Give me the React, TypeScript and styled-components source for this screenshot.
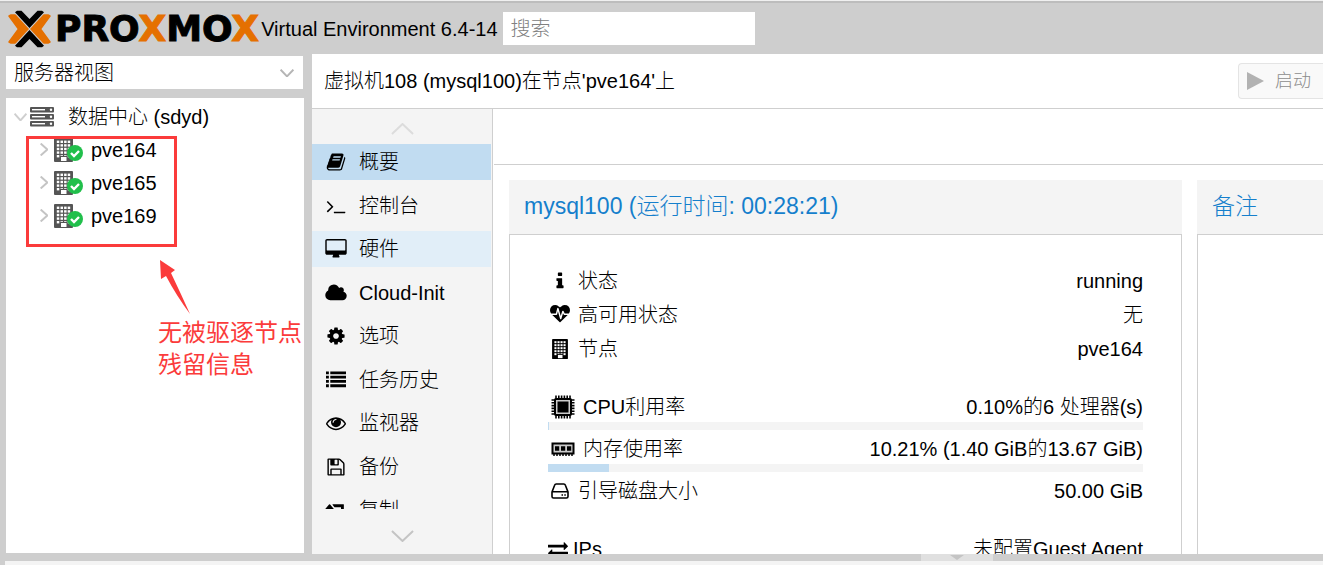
import React from "react";
import styled, { createGlobalStyle, css } from "styled-components";

const GlobalStyle = createGlobalStyle`
  *, *::before, *::after { box-sizing: border-box; }
  html, body, #root { height: 100%; }
  body {
    margin: 0;
    overflow: hidden;
    background: #cecece;
    color: #000;
    font-family: "Liberation Sans", "Noto Sans CJK SC", sans-serif;
    font-size: 20px;
    font-weight: 300;
    line-height: 24px;
  }
  input, select, button { font: inherit; color: inherit; }
`;

/* ---------- icons ---------- */

const PATHS = {
  book: "M1703 478q40 57 18 129l-275 906q-19 64-76.5 107.5t-122.5 43.5h-923q-77 0-148.5-53.5t-99.5-131.5q-24-67-2-127 0-4 3-27t4-37q1-8-3-21.5t-3-19.5q2-11 8-21t16.5-23.5 16.5-23.5q23-38 45-91.5t30-91.5q3-10 .5-30t-.5-28q3-11 17-28t17-23q21-36 42-92t25-90q1-9-2.5-32t.5-28q4-13 22-30.5t22-22.5q19-26 42.5-84.5t27.5-96.5q1-8-3-25.5t-2-26.5q2-8 9-18t18-23 17-21q8-12 16.5-30.5t15-35 16-36 19.5-32 26.5-23.5 36-11.5 47.5 5.5l-1 3q38-9 51-9h761q74 0 114 56t18 130l-274 906q-36 119-71.5 153.5t-128.5 34.5h-869q-27 0-38 15-11 16-1 43 24 70 144 70h923q29 0 56-15.5t35-41.5l300-987q7-22 5-57 38 15 59 43zm-1064 2q-4 13 2 22.5t20 9.5h608q13 0 25.5-9.5t16.5-22.5l21-64q4-13-2-22.5t-20-9.5h-608q-13 0-25.5 9.5t-16.5 22.5zm-83 256q-4 13 2 22.5t20 9.5h608q13 0 25.5-9.5t16.5-22.5l21-64q4-13-2-22.5t-20-9.5h-608q-13 0-25.5 9.5t-16.5 22.5z",
  terminal: "M649 983l-466 466q-10 10-23 10t-23-10l-50-50q-10-10-10-23t10-23l393-393-393-393q-10-10-10-23t10-23l50-50q10-10 23-10t23 10l466 466q10 10 10 23t-10 23zm1079 457v64q0 14-9 23t-23 9h-960q-14 0-23-9t-9-23v-64q0-14 9-23t23-9h960q14 0 23 9t9 23z",
  desktop: "M1728 992v-832q0-13-9.5-22.5t-22.5-9.5h-1600q-13 0-22.5 9.5t-9.5 22.5v832q0 13 9.5 22.5t22.5 9.5h1600q13 0 22.5-9.5t9.5-22.5zm128-832v1088q0 66-47 113t-113 47h-544q0 37 16 77.5t32 71 16 43.5q0 26-19 45t-45 19h-512q-26 0-45-19t-19-45q0-14 16-44t32-70 16-78h-544q-66 0-113-47t-47-113v-1088q0-66 47-113t113-47h1600q66 0 113 47t47 113z",
  cloud: "M1856 1152q0 159-112.5 271.5t-271.5 112.5h-1088q-185 0-316.5-131.5t-131.5-316.5q0-132 71-241.5t187-163.5q-2-28-2-43 0-212 150-362t362-150q158 0 286.5 88t187.5 230q70-62 166-62 106 0 181 75t75 181q0 75-41 138 129 30 213 134.5t84 239.5z",
  cog: "M1152 896q0-106-75-181t-181-75-181 75-75 181 75 181 181 75 181-75 75-181zm512-109v222q0 12-8 23t-20 13l-185 28q-19 54-39 91 35 50 107 138 10 12 10 25t-9 23q-27 37-99 108t-94 71q-12 0-26-9l-138-108q-44 23-91 38-16 136-29 186-7 28-36 28h-222q-14 0-24.5-8.5t-11.5-21.5l-28-184q-49-16-90-37l-141 107q-10 9-25 9-14 0-25-11-126-114-165-168-7-10-7-23 0-12 8-23 15-21 51-66.5t54-70.5q-27-50-41-99l-183-27q-13-2-21-12.5t-8-23.5v-222q0-12 8-23t19-13l186-28q14-46 39-92-40-57-107-138-10-12-10-24 0-10 9-23 26-36 98.5-107.5t94.5-71.5q13 0 26 10l138 107q44-23 91-38 16-136 29-186 7-28 36-28h222q14 0 24.5 8.5t11.5 21.5l28 184q49 16 90 37l142-107q9-9 24-9 13 0 25 10 129 119 165 170 7 8 7 22 0 12-8 23-15 21-51 66.5t-54 70.5q26 50 41 98l183 28q13 2 21 12.5t8 23.5z",
  list: "M0 1280h256v256H0zM0 896h256v256H0zM0 512h256v256H0zM0 128h256v256H0zM384 1280h1408v256H384zM384 896h1408v256H384zM384 512h1408v256H384zM384 128h1408v256H384z",
  eye: "M1664 960q-152-236-381-353 61 104 61 225 0 185-131.5 316.5t-316.5 131.5-316.5-131.5-131.5-316.5q0-121 61-225-229 117-381 353 133 205 333.5 326.5t434.5 121.5 434.5-121.5 333.5-326.5zm-720-384q0-20-14-34t-34-14q-125 0-214.5 89.5t-89.5 214.5q0 20 14 34t34 14 34-14 14-34q0-86 61-147t147-61q20 0 34-14t14-34zm848 384q0 34-20 69-140 230-376.5 368.5t-499.5 138.5-499.5-139-376.5-368q-20-35-20-69t20-69q140-229 376.5-368t499.5-139 499.5 139 376.5 368q20 35 20 69z",
  floppy: "M512 1536h768v-384h-768v384zm896 0h128v-896q0-14-10-38.5t-20-34.5l-281-281q-10-10-34-20t-39-10v416q0 40-28 68t-68 28h-576q-40 0-68-28t-28-68v-416h-128v1280h128v-416q0-40 28-68t68-28h832q40 0 68 28t28 68v416zm-384-928v-320q0-13-9.5-22.5t-22.5-9.5h-192q-13 0-22.5 9.5t-9.5 22.5v320q0 13 9.5 22.5t22.5 9.5h192q13 0 22.5-9.5t9.5-22.5zm640 32v928q0 40-28 68t-68 28h-1344q-40 0-68-28t-28-68v-1344q0-40 28-68t68-28h928q40 0 88 20t76 48l280 280q28 28 48 76t20 88z",
  retweet: "M1280 1504q0 13-9.5 22.5t-22.5 9.5h-960q-8 0-13.5-2t-9-7-5.5-8-3-11.5-1-11.5v-600h-192q-26 0-45-19t-19-45q0-24 15-41l320-384q19-22 49-22t49 22l320 384q15 17 15 41 0 26-19 45t-45 19h-192v384h576q16 0 25 11l160 192q7 10 7 21zm640-416q0 24-15 41l-320 384q-20 23-49 23t-49-23l-320-384q-15-17-15-41 0-26 19-45t45-19h192v-384h-576q-16 0-25-12l-160-192q-7-9-7-20 0-13 9.5-22.5t22.5-9.5h960q8 0 13.5 2t9 7 5.5 8 3 11.5 1 11.5v600h192q26 0 45 19t19 45z",
  info: "M1216 1344v128q0 26-19 45t-45 19h-512q-26 0-45-19t-19-45v-128q0-26 19-45t45-19h64v-384h-64q-26 0-45-19t-19-45v-128q0-26 19-45t45-19h384q26 0 45 19t19 45v576h64q26 0 45 19t19 45zm-128-1152v192q0 26-19 45t-45 19h-256q-26 0-45-19t-19-45v-192q0-26 19-45t45-19h256q26 0 45 19t19 45z",
  heartbeat: "M1280 896h305q-5 6-10 10.5t-9 7.5l-3 4-623 600q-18 18-44 18t-44-18l-624-602q-5-2-21-20h369q22 0 39.5-13.5t22.5-34.5l70-281 190 667q6 20 23 33t39 13q21 0 38-13t23-33l146-485 56 112q18 35 57 35zm512-428q0 145-103 300h-369l-111-221q-8-17-25.5-27t-36.5-8q-45 5-56 46l-129 430-196-686q-6-20-23.5-33t-39.5-13-39 13.5-22 34.5l-116 464h-423q-103-155-103-300 0-220 127-344t351-124q62 0 126.5 21.5t120 58 95.5 68.5 76 68q36-36 76-68t95.5-68.5 120-58 126.5-21.5q224 0 351 124t127 344z",
  exchange: "M1792 1184v192q0 13-9.5 22.5t-22.5 9.5h-1376v192q0 13-9.5 22.5t-22.5 9.5q-12 0-24-10l-319-320q-9-9-9-22 0-14 9-23l320-320q9-9 23-9 13 0 22.5 9.5t9.5 22.5v192h1376q13 0 22.5 9.5t9.5 22.5zm0-544q0 14-9 23l-320 320q-9 9-23 9-13 0-22.5-9.5t-9.5-22.5v-192h-1376q-13 0-22.5-9.5t-9.5-22.5v-192q0-13 9.5-22.5t22.5-9.5h1376v-192q0-14 9-23t23-9q12 0 24 10l319 319q9 9 9 23z",
};

type GlyphName = keyof typeof PATHS;

const WIDE: GlyphName[] = ["desktop", "cloud"];

const Svg = styled.svg`
  display: block;
  flex: none;
`;

function Glyph({ name, size }: { name: GlyphName; size: number }) {
  const wide = WIDE.includes(name) || name === "retweet";
  const left = WIDE.includes(name) ? -64 : 0;
  return (
    <Svg
      width={wide ? size + 2 : size}
      height={size}
      viewBox={`${left} 0 ${wide ? 1920 : 1792} 1792`}
      fill="currentColor"
      aria-hidden="true"
    >
      <path d={PATHS[name]} />
    </Svg>
  );
}

function Building({ width, height }: { width: number; height: number }) {
  const columns = [2.8, 6.5, 10.1, 13.7];
  const rows = [2.6, 6.2, 9.8, 13.4, 17];
  return (
    <Svg width={width} height={height} viewBox="0 0 19 24" aria-hidden="true">
      <rect width="19" height="24" rx="1" fill="currentColor" />
      {rows.map((y) =>
        columns.map((x) => <rect key={`${x}-${y}`} x={x} y={y} width="2.5" height="2.4" fill="#fff" />)
      )}
      <path d="M6 17.800h7v5H6z" fill="currentColor" />
      <path d="M7 19h5.500v4H7z" fill="#fff" />
    </Svg>
  );
}

function Servers() {
  return (
    <Svg width="24" height="20" viewBox="0 0 24 20" aria-hidden="true">
      {[0, 7, 14].map((y) => (
        <g key={y}>
          <rect y={y} width="24" height="5.500" rx="1" fill="#555" />
          <rect x="2" y={y + 2} width="13" height="1.400" fill="#fff" />
          <circle cx="21" cy={y + 2.7} r="1.2" fill="#fff" />
        </g>
      ))}
    </Svg>
  );
}

function Cpu() {
  const pins = [5, 7.8, 10.6, 13.4, 16.2, 19];
  return (
    <Svg width="24" height="24" viewBox="0 0 24 24" aria-hidden="true">
      {pins.map((p) => (
        <path key={p} d={`M${p} .5v23M.5 ${p}h23`} stroke="#000" strokeWidth="1.6" />
      ))}
      <rect x="4" y="4" width="16" height="16" rx="1" fill="#ccc" stroke="#000" strokeWidth="2" />
      <rect x="6.500" y="6.500" width="11" height="11" fill="#000" />
    </Svg>
  );
}

function Memory() {
  return (
    <Svg width="24" height="24" viewBox="0 0 24 24" aria-hidden="true">
      <rect x="1.500" y="6.500" width="21" height="10" fill="#ccc" stroke="#000" strokeWidth="2" />
      <path d="M4 9.200h4.200v4.500H4zM10 9.200h4.200v4.500H10zM16 9.200h4.200v4.500H16z" fill="#000" />
      <path d="M3 17v2M6 17v2M9 17v2M12 17v2M15 17v2M18 17v2M21 17v2" stroke="#000" strokeWidth="1.5" />
    </Svg>
  );
}

function Drive() {
  return (
    <Svg width="18" height="16" viewBox="0 0 18 16" fill="none" stroke="#000" strokeWidth="1.6" aria-hidden="true">
      <path d="M1 9L3.6 2.2Q4 1 5.200 1h7.600Q14 1 14.400 2.200L17 9v4.500Q17 15 15.500 15h-13Q1 15 1 13.500zM1.500 8.800h15" />
      <path d="M10.500 12h1.500M13.300 12h1.500" />
    </Svg>
  );
}

function Chevron({ direction, color, width, height }: { direction: "up" | "down" | "right"; color: string; width: number; height: number }) {
  const d = { up: "M1 11L12 1L23 11", down: "M1 1L12 11L23 1", right: "M1 1L11 12L1 23" }[direction];
  return (
    <Svg
      width={width}
      height={height}
      viewBox={direction === "right" ? "0 0 12 24" : "0 0 24 12"}
      preserveAspectRatio="none"
      fill="none"
      stroke={color}
      strokeWidth="2"
      aria-hidden="true"
    >
      <path d={d} vectorEffect="non-scaling-stroke" />
    </Svg>
  );
}

/* ---------- header ---------- */

const Page = styled.div`
  display: flex;
  flex-direction: column;
  height: 100vh;
  border-top: 1px solid #f0f0f0;
  overflow: hidden;
`;

const Header = styled.header`
  display: flex;
  align-items: center;
  flex: none;
  height: 53px;
  padding: 0 8px;
  border-top: 2px solid #bdbdbd;
`;

const Wordmark = styled.span`
  margin-left: 3px;
  font: bold 36px/40px "DejaVu Sans", sans-serif;
  -webkit-text-stroke: 1px currentColor;
`;

const Accent = styled.span`
  color: #e57000;
`;

const Version = styled.span`
  margin-left: 2px;
  white-space: nowrap;
`;

const Search = styled.input`
  width: 252px;
  height: 33px;
  margin-left: 5px;
  padding: 2px 8px 0;
  border: 0;
  background: #fff;
  &::placeholder { color: #808080; opacity: 1; }
`;

function Logo() {
  return (
    <Svg width="44" height="38" viewBox="0 0 44 38" strokeLinejoin="round" aria-hidden="true">
      <path
        d="M1 6L3 5H8L11 7L20.500 19L11 31L8 33H3L1 32L10.500 19ZM42 6L40 5H35L32 7L22.500 19L32 31L35 33H40L42 32L32.500 19Z"
        fill="#e57000"
        stroke="#e57000"
        strokeWidth="1.500"
      />
      <path
        d="M7 2.200L9 .8H13.500L21.500 9L29.500 .8H34L36 2.200L21.500 18ZM7 35.800L9 37.200H13.500L21.500 29L29.500 37.200H34L36 35.800L21.500 20Z"
        fill="#000"
        stroke="#cecece"
        strokeWidth="2"
        paintOrder="stroke"
      />
    </Svg>
  );
}

/* ---------- body layout ---------- */

const Body = styled.div`
  display: flex;
  flex: 1;
  gap: 8px;
  min-height: 0;
  padding-left: 6px;
`;

const Sidebar = styled.aside`
  display: flex;
  flex-direction: column;
  flex: none;
  gap: 9px;
  width: 298px;
  padding: 2px 0 1px;
`;

const ViewPicker = styled.div`
  position: relative;
  flex: none;
`;

const ViewSelect = styled.select`
  display: block;
  width: 297px;
  height: 33px;
  padding: 0 8px;
  border: 0;
  border-radius: 0;
  background: #fff;
  appearance: none;
`;

const PickerArrow = styled.span`
  position: absolute;
  top: 13px;
  right: 10px;
  pointer-events: none;
`;

const Tree = styled.nav`
  position: relative;
  flex: 1;
  padding: 2px 0 0 8px;
  background: #fff;
`;

const TreeList = styled.ul`
  margin: 0;
  padding: 0;
  list-style: none;
`;

const TreeRow = styled.li<{ $child?: boolean }>`
  display: flex;
  align-items: center;
  height: 33px;
  padding-left: ${(p) => (p.$child ? 26 : 0)}px;
`;

const NodeIcon = styled.span<{ $child?: boolean }>`
  position: relative;
  width: ${(p) => (p.$child ? 29 : 24)}px;
  margin: 0 ${(p) => (p.$child ? 8 : 14)}px 0 ${(p) => (p.$child ? 6 : 3)}px;
  color: #555;
`;

const StatusBadge = styled.svg`
  position: absolute;
  right: 0;
  bottom: 1px;
`;

const Highlight = styled.div`
  position: absolute;
  top: 38px;
  left: 20px;
  width: 151px;
  height: 111px;
  border: 3px solid #fb3b3b;
`;

const Note = styled.figure`
  position: absolute;
  top: 161px;
  left: 152px;
  margin: 0;
  color: #fb3b3b;
  font-size: 24px;
  font-weight: 400;
  line-height: 32px;
  white-space: nowrap;
`;

const Main = styled.main`
  display: flex;
  flex-direction: column;
  flex: 1;
  min-width: 0;
  background: #fff;
`;

const TitleBar = styled.div`
  display: flex;
  align-items: center;
  justify-content: space-between;
  flex: none;
  height: 55px;
  padding-left: 12px;
  border-bottom: 1px solid #cfcfcf;
  overflow: hidden;
`;

const StartButton = styled.button`
  display: flex;
  align-items: center;
  gap: 11px;
  height: 36px;
  padding: 0 12px 0 8px;
  border: 1px solid #e4e4e4;
  border-right: 0;
  border-radius: 4px 0 0 4px;
  background: #f9f9f9;
  color: #8c8c8c;
  font-size: 18px;
`;

const Workspace = styled.div`
  display: flex;
  flex: 1;
  min-height: 0;
`;

const Menu = styled.nav`
  display: flex;
  flex-direction: column;
  flex: none;
  width: 181px;
  border-right: 1px solid #cfcfcf;
  background: #f4f4f4;
`;

const Scroller = styled.button`
  display: flex;
  align-items: center;
  justify-content: center;
  flex: none;
  height: 35px;
  padding: 4px 0 0;
  border: 0;
  background: none;
`;

const ScrollerEnd = styled(Scroller)`
  height: 45px;
  padding-top: 8px;
`;

const MenuList = styled.ul`
  flex: 1;
  min-height: 0;
  margin: 0;
  padding: 0;
  overflow: hidden;
  list-style: none;
`;

const MenuItem = styled.li`
  margin-bottom: 8px;
  &:nth-child(even) { margin-bottom: 7px; }
`;

const MenuLink = styled.a<{ $state?: "selected" | "hover" }>`
  display: flex;
  align-items: center;
  height: 36px;
  margin-right: 1px;
  padding-left: 12px;
  color: inherit;
  text-decoration: none;
  ${(p) => p.$state === "selected" && css`background: #c1dcf1;`}
  ${(p) => p.$state === "hover" && css`background: #e1eef8;`}
`;

const MenuIcon = styled.span`
  display: flex;
  justify-content: center;
  width: 24px;
  margin-right: 11px;
`;

const Content = styled.section`
  display: flex;
  flex-direction: column;
  flex: 1;
  min-width: 0;
`;

const Toolbar = styled.div`
  flex: none;
  height: 56px;
  margin-left: 1px;
  border-bottom: 1px solid #cfcfcf;
`;

const Cards = styled.div`
  display: grid;
  grid-template-columns: 673px 1fr;
  flex: 1;
  gap: 15px;
  min-height: 0;
  padding: 15px 0 0 16px;
`;

const Card = styled.article`
  display: flex;
  flex-direction: column;
  min-height: 0;
  overflow: hidden;
`;

const CardTitle = styled.h2`
  flex: none;
  height: 54px;
  margin: 0;
  padding: 0 15px;
  background: #f4f4f4;
  color: #157fcc;
  font-size: 23px;
  font-weight: 300;
  line-height: 52px;
`;

const CardBody = styled.div<{ $clipped?: boolean }>`
  flex: 1;
  min-height: 0;
  padding: 29px 38px 0;
  border: 1px solid #cfcfcf;
  border-width: 1px ${(p) => (p.$clipped ? 0 : 1)}px 0 1px;
  overflow: hidden;
`;

const Facts = styled.dl`
  margin: 0 0 26px;
`;

const Fact = styled.div<{ $tall?: boolean }>`
  display: flex;
  align-items: center;
  height: ${(p) => (p.$tall ? 34 : 30)}px;
`;

const ICON_BOX = {
  narrow: css`width: 20px; margin-right: 5px;`,
  normal: css`width: 24px; margin-right: 6px;`,
  wide: css`width: 30px; margin-right: 5px;`,
};

const FactIcon = styled.span<{ $box?: keyof typeof ICON_BOX }>`
  display: flex;
  justify-content: center;
  ${(p) => ICON_BOX[p.$box ?? "normal"]}
`;

const Term = styled.dt`
  flex: 1;
`;

const Value = styled.dd`
  margin: 0;
`;

const Bar = styled.div`
  height: 8px;
  margin-bottom: 4px;
  background: #f4f4f4;
`;

const BarFill = styled.div`
  min-width: 1px;
  height: 8px;
  background: #c1dcf1;
`;

const Footer = styled.footer`
  position: relative;
  display: flex;
  flex: none;
  flex-direction: column;
  height: 11px;
  padding: 7px 0 0 5px;
`;

const LogPanel = styled.div`
  flex: 1;
  background: #f4f4f4;
`;

const CollapseHandle = styled.button`
  position: absolute;
  top: 0;
  left: calc(70% - 5px);
  display: flex;
  align-items: center;
  justify-content: center;
  width: 72px;
  height: 7px;
  padding: 0;
  border: 0;
  background: #e0e0e0;
`;

/* ---------- page ---------- */

const nodes = ["pve164", "pve165", "pve169"];

const menu: { icon: GlyphName; label: string; state?: "selected" | "hover" }[] = [
  { icon: "book", label: "概要", state: "selected" },
  { icon: "terminal", label: "控制台" },
  { icon: "desktop", label: "硬件", state: "hover" },
  { icon: "cloud", label: "Cloud-Init" },
  { icon: "cog", label: "选项" },
  { icon: "list", label: "任务历史" },
  { icon: "eye", label: "监视器" },
  { icon: "floppy", label: "备份" },
  { icon: "retweet", label: "复制" },
];

function UsageBar({ percent }: { percent: number }) {
  return (
    <Bar>
      <BarFill style={{ width: `${percent}%` }} />
    </Bar>
  );
}

export default function App() {
  return (
    <Page>
      <GlobalStyle />
      <Header>
        <Logo />
        <Wordmark>
          PRO<Accent>X</Accent>MO<Accent>X</Accent>
        </Wordmark>
        <Version>Virtual Environment 6.4-14</Version>
        <Search type="text" placeholder="搜索" aria-label="搜索" />
      </Header>

      <Body>
        <Sidebar>
          <ViewPicker>
            <ViewSelect aria-label="服务器视图">
              <option>服务器视图</option>
            </ViewSelect>
            <PickerArrow>
              <Chevron direction="down" color="#b5b5b5" width={14} height={8} />
            </PickerArrow>
          </ViewPicker>
          <Tree aria-label="服务器视图">
            <TreeList>
              <TreeRow>
                <Chevron direction="down" color="#cfcfcf" width={13} height={8} />
                <NodeIcon>
                  <Servers />
                </NodeIcon>
                数据中心 (sdyd)
              </TreeRow>
              {nodes.map((node) => (
                <TreeRow key={node} $child>
                  <Chevron direction="right" color="#c4c4c4" width={8} height={13} />
                  <NodeIcon $child>
                    <Building width={19} height={24} />
                    <StatusBadge width="16" height="16" viewBox="0 0 16 16" aria-hidden="true">
                      <circle cx="8" cy="8" r="8" fill="#21bf4b" />
                      <path d="M4 8l3 3 5-5" fill="none" stroke="#fff" strokeWidth="2.400" />
                    </StatusBadge>
                  </NodeIcon>
                  {node}
                </TreeRow>
              ))}
            </TreeList>
            <Highlight />
            <Note>
              <Svg width="36" height="58" viewBox="0 0 36 58" aria-hidden="true">
                <path d="M2 1L17 11L13 14Q23 35 32 55Q18 36 8 17L3 20Z" fill="#fb3b3b" />
              </Svg>
              <figcaption>
                无被驱逐节点
                <br />
                残留信息
              </figcaption>
            </Note>
          </Tree>
        </Sidebar>

        <Main>
          <TitleBar>
            <span>虚拟机108 (mysql100)在节点'pve164'上</span>
            <StartButton type="button" disabled>
              <Svg width="17" height="18" viewBox="0 0 17 18" aria-hidden="true">
                <path d="M0 0L17 9L0 18Z" fill="#b2b2b2" />
              </Svg>
              启动
            </StartButton>
          </TitleBar>
          <Workspace>
            <Menu>
              <Scroller type="button" aria-label="向上滚动">
                <Chevron direction="up" color="#dcdcdc" width={23} height={12} />
              </Scroller>
              <MenuList>
                {menu.map((item) => (
                  <MenuItem key={item.label}>
                    <MenuLink href="#" $state={item.state}>
                      <MenuIcon>
                        <Glyph name={item.icon} size={20} />
                      </MenuIcon>
                      {item.label}
                    </MenuLink>
                  </MenuItem>
                ))}
              </MenuList>
              <ScrollerEnd type="button" aria-label="向下滚动">
                <Chevron direction="down" color="#c4c4c4" width={23} height={12} />
              </ScrollerEnd>
            </Menu>

            <Content>
              <Toolbar />
              <Cards>
                <Card>
                  <CardTitle>mysql100 (运行时间: 00:28:21)</CardTitle>
                  <CardBody>
                    <Facts>
                      <Fact $tall>
                        <FactIcon><Glyph name="info" size={20} /></FactIcon>
                        <Term>状态</Term>
                        <Value>running</Value>
                      </Fact>
                      <Fact $tall>
                        <FactIcon><Glyph name="heartbeat" size={20} /></FactIcon>
                        <Term>高可用状态</Term>
                        <Value>无</Value>
                      </Fact>
                      <Fact $tall>
                        <FactIcon><Building width={16} height={20} /></FactIcon>
                        <Term>节点</Term>
                        <Value>pve164</Value>
                      </Fact>
                    </Facts>
                    <Facts>
                      <Fact>
                        <FactIcon $box="wide"><Cpu /></FactIcon>
                        <Term>CPU利用率</Term>
                        <Value>0.10%的6 处理器(s)</Value>
                      </Fact>
                      <UsageBar percent={0.1} />
                      <Fact>
                        <FactIcon $box="wide"><Memory /></FactIcon>
                        <Term>内存使用率</Term>
                        <Value>10.21% (1.40 GiB的13.67 GiB)</Value>
                      </Fact>
                      <UsageBar percent={10.21} />
                      <Fact>
                        <FactIcon><Drive /></FactIcon>
                        <Term>引导磁盘大小</Term>
                        <Value>50.00 GiB</Value>
                      </Fact>
                    </Facts>
                    <Facts>
                      <Fact $tall>
                        <FactIcon $box="narrow"><Glyph name="exchange" size={20} /></FactIcon>
                        <Term>IPs</Term>
                        <Value>未配置Guest Agent</Value>
                      </Fact>
                    </Facts>
                  </CardBody>
                </Card>
                <Card>
                  <CardTitle>备注</CardTitle>
                  <CardBody $clipped />
                </Card>
              </Cards>
            </Content>
          </Workspace>
        </Main>
      </Body>

      <Footer>
        <CollapseHandle type="button" aria-label="折叠">
          <Svg width="14" height="5" viewBox="0 0 14 5" aria-hidden="true">
            <path d="M0 0h14L7 5z" fill="#c4c4c4" />
          </Svg>
        </CollapseHandle>
        <LogPanel />
      </Footer>
    </Page>
  );
}
